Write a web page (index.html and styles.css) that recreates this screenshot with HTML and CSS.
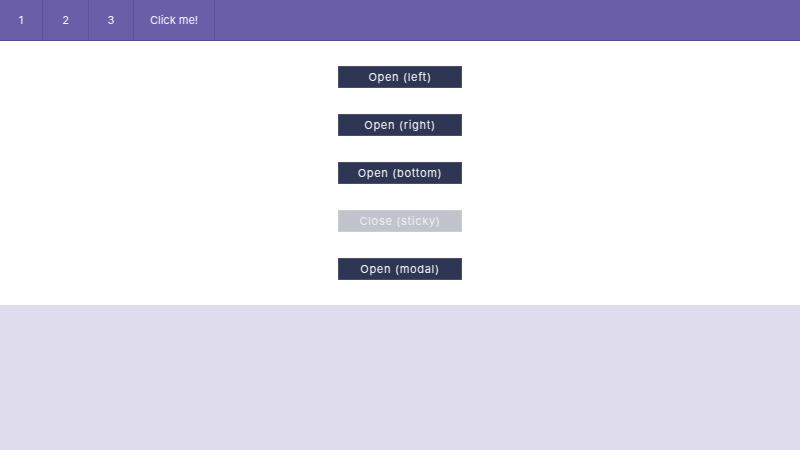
FILE: index.html
```html
<!DOCTYPE html>
<html>
<head>
<meta charset="utf-8">
<link rel="stylesheet" href="styles.css">
</head>
<body>
<header class="topbar">
  <nav class="nav">
    <a class="nav-item">1</a>
    <a class="nav-item">2</a>
    <a class="nav-item">3</a>
    <a class="nav-item">Click me!</a>
  </nav>
</header>
<main class="content">
  <button class="btn">Open (left)</button>
  <button class="btn">Open (right)</button>
  <button class="btn">Open (bottom)</button>
  <button class="btn btn-disabled">Close (sticky)</button>
  <button class="btn">Open (modal)</button>
</main>
<div class="rest"></div>
</body>
</html>
```
FILE: styles.css
```css
* { box-sizing: border-box; }
html, body { margin: 0; padding: 0; }
body {
  width: 800px;
  height: 450px;
  background: #dfdcee;
  font-family: Inter, "Noto Sans", sans-serif;
  overflow: hidden;
}
.topbar {
  height: 41px;
  background: #6a5ea9;
  border-bottom: 1px solid #574c93;
}
.nav {
  display: flex;
  height: 40px;
}
.nav-item {
  display: flex;
  align-items: center;
  justify-content: center;
  padding: 0;
  height: 40px;
  color: #f2f0fa;
  font-size: 11px;
  white-space: nowrap;
  border-right: 1px solid #5d529b;
}
.nav-item:nth-child(1) { width: 43px; }
.nav-item:nth-child(2) { width: 46px; }
.nav-item:nth-child(3) { width: 45px; }
.nav-item:nth-child(4) { width: 81px; }
.content {
  background: #ffffff;
  height: 264px;
  padding: 25px 0 0;
  display: flex;
  flex-direction: column;
  align-items: center;
  gap: 26px;
}
.btn {
  width: 124px;
  height: 22px;
  margin: 0;
  padding: 0;
  border: 1px solid #4a5068;
  background: #2f3653;
  color: #f4f5f8;
  font-family: Inter, "Noto Sans", sans-serif;
  font-size: 11px;
  font-weight: 400;
  letter-spacing: 0.7px;
  line-height: 20px;
  text-align: center;
}
.btn-disabled {
  background: #c1c4cc;
  border-color: #c9ccd3;
  color: #eef0f3;
}
```
